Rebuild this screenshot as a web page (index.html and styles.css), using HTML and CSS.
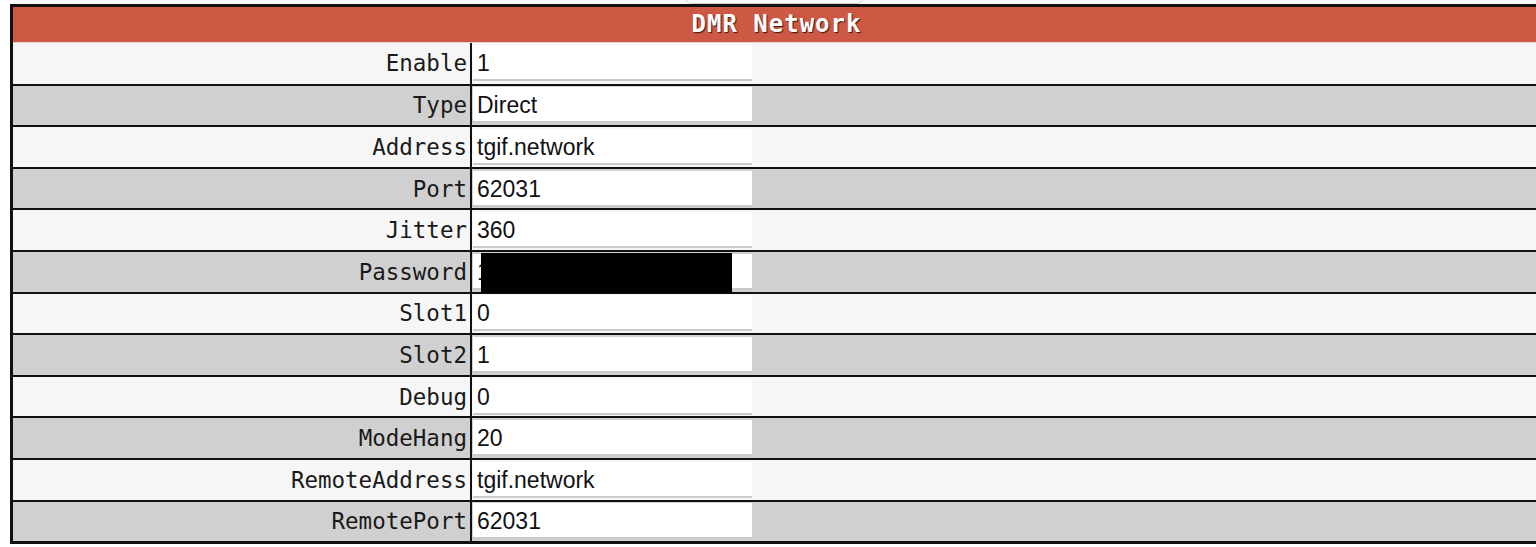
FILE: index.html
```html
<!DOCTYPE html>
<html lang="en">
<head>
<meta charset="utf-8">
<title>DMR Network</title>
<link rel="stylesheet" href="styles.css">
</head>
<body>
<div class="page">
  <div class="tab"></div>
  <section class="panel">
    <div class="head">DMR Network</div>
    <div class="row odd"><div class="key">Enable</div><div class="val"><div class="field">1</div></div></div>
    <div class="row even"><div class="key">Type</div><div class="val"><div class="field">Direct</div></div></div>
    <div class="row odd"><div class="key">Address</div><div class="val"><div class="field">tgif.network</div></div></div>
    <div class="row even"><div class="key">Port</div><div class="val"><div class="field">62031</div></div></div>
    <div class="row odd"><div class="key">Jitter</div><div class="val"><div class="field">360</div></div></div>
    <div class="row even"><div class="key">Password</div><div class="val"><div class="field">1</div><div class="redact"></div></div></div>
    <div class="row odd"><div class="key">Slot1</div><div class="val"><div class="field">0</div></div></div>
    <div class="row even"><div class="key">Slot2</div><div class="val"><div class="field">1</div></div></div>
    <div class="row odd"><div class="key">Debug</div><div class="val"><div class="field">0</div></div></div>
    <div class="row even"><div class="key">ModeHang</div><div class="val"><div class="field">20</div></div></div>
    <div class="row odd"><div class="key">RemoteAddress</div><div class="val"><div class="field">tgif.network</div></div></div>
    <div class="row even"><div class="key">RemotePort</div><div class="val"><div class="field">62031</div></div></div>
  </section>
</div>
</body>
</html>
```
FILE: styles.css
```css
html, body {
  margin: 0;
  padding: 0;
  background: #ffffff;
  overflow: hidden;
}

.page {
  width: 1536px;
  height: 547px;
  overflow: hidden;
  padding-top: 1px;
  box-sizing: border-box;
}

.tab {
  width: 180px;
  height: 18px;
  margin: -17px 0 0 683px;
  border: 1px solid #d0d0d0;
  border-radius: 0 0 9px 9px;
  background: #ffffff;
}

.panel {
  margin-left: 10px;
  width: 1527px;
  border: 3px solid #111111;
  background: #f6f6f6;
}

.head {
  height: 35px;
  line-height: 35px;
  background: #cd5843;
  color: #ffffff;
  text-align: center;
  font-family: "DejaVu Sans Mono", monospace;
  font-weight: bold;
  font-size: 24px;
  letter-spacing: 1px;
  text-shadow: 1px 1px 1px #3a1a14;
  border-bottom: 1px solid #ead3ce;
}

.row {
  display: grid;
  grid-template-columns: 459px 1fr;
  height: 39.6px;
  border-top: 2px solid #111111;
}

.head + .row {
  border-top: none;
  height: 40.6px;
}

.odd { background: #f6f6f6; }
.even { background: #d0d0d0; }

.key {
  border-right: 2px solid #111111;
  padding-right: 3px;
  font-family: "DejaVu Sans Mono", monospace;
  font-size: 22.5px;
  color: #1a1a1a;
  display: flex;
  align-items: center;
  justify-content: flex-end;
}

.val {
  position: relative;
  display: flex;
  align-items: center;
  padding-left: 1px;
}

.field {
  box-sizing: border-box;
  width: 279px;
  height: 36px;
  background: #ffffff;
  border-bottom: 2px solid #cacaca;
  padding-left: 4px;
  font-family: "Liberation Sans", Arial, sans-serif;
  font-size: 23px;
  line-height: 37px;
  color: #111111;
}

.redact {
  position: absolute;
  left: 9px;
  top: 1px;
  bottom: -1px;
  width: 251px;
  background: #000000;
}
```
